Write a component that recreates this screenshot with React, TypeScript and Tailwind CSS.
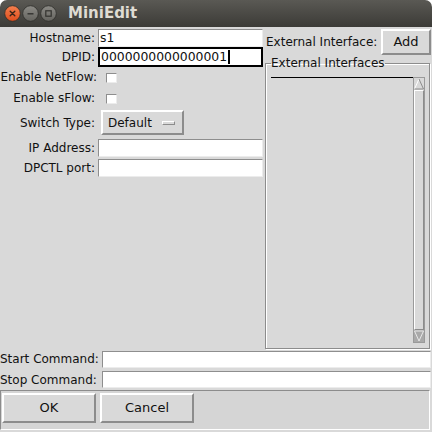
import type { ReactNode } from 'react';

// Tk-style 3D edges: light top-left, dark bottom-right for raised, inverted for sunken.
const raised = 'border-2 border-t-white border-l-white border-b-[#8c8c8c] border-r-[#8c8c8c]';
const sunken = 'border border-t-[#8e8e8e] border-l-[#8e8e8e] border-b-[#ececec] border-r-[#ececec]';

function WindowButton({ kind }: { kind: 'close' | 'min' | 'max' }) {
  const isClose = kind === 'close';
  return (
    <svg width="17" height="17" viewBox="0 0 17 17">
      <defs>
        <linearGradient id={`g-${kind}`} x1="0" y1="0" x2="0" y2="1">
          <stop offset="0" stopColor={isClose ? '#f4804f' : '#8c8b86'} />
          <stop offset="1" stopColor={isClose ? '#df4d1c' : '#64635e'} />
        </linearGradient>
      </defs>
      <circle cx="8.5" cy="8.5" r="7.8" fill={`url(#g-${kind})`} stroke="#2f2e2b" strokeWidth="0.8" />
      {kind === 'close' && (
        <path d="M6.2 6.2 L10.8 10.8 M10.8 6.2 L6.2 10.8" stroke="#3a2418" strokeWidth="1.4" strokeLinecap="round" />
      )}
      {kind === 'min' && <path d="M5.5 8.8 H11.5" stroke="#33322f" strokeWidth="1.4" />}
      {kind === 'max' && <rect x="5.8" y="5.8" width="5.4" height="5.4" fill="none" stroke="#33322f" strokeWidth="1.2" />}
    </svg>
  );
}

function TitleBar() {
  return (
    <div className="flex h-[27px] items-center rounded-t-[7px] bg-gradient-to-b from-[#5a5954] to-[#3c3b37] pl-[4px]">
      <div className="flex gap-[1px]">
        <WindowButton kind="close" />
        <WindowButton kind="min" />
        <WindowButton kind="max" />
      </div>
      <span className="ml-[11px] text-[15px] leading-none font-bold text-[#dfdbd2]">MiniEdit</span>
    </div>
  );
}

function Entry({ value, focused, className = '' }: { value?: string; focused?: boolean; className?: string }) {
  const edge = focused ? 'border-2 border-black' : sunken;
  return (
    <div className={`flex items-center bg-white pl-[1px] leading-none ${edge} ${className}`}>
      {value && <span className="whitespace-nowrap text-[12.4px]">{value}</span>}
      {focused && <span className="ml-[1px] h-[14px] w-[2px] bg-black" />}
    </div>
  );
}

function Checkbox() {
  return <div className={`ml-[8px] h-[10px] w-[11px] bg-white ${sunken}`} />;
}

function Label({ children, tight }: { children: ReactNode; tight?: boolean }) {
  return (
    <div className={`flex items-center justify-end whitespace-nowrap ${tight ? '' : 'pr-[2px]'}`}>{children}</div>
  );
}

function LeftForm() {
  return (
    <div className="grid w-[264px] shrink-0 grid-cols-[97px_1fr] grid-rows-[19px_20px_20px_21px_29px_21px_19px] gap-x-px pt-[1px]">
      <Label>Hostname:</Label>
      <Entry value="s1" className="mr-px h-[18px] self-end" />

      <Label>DPID:</Label>
      <Entry value="0000000000000001" focused className="mr-px h-[20px]" />

      <Label tight>Enable NetFlow:</Label>
      <div className="flex items-center pt-[2px]">
        <Checkbox />
      </div>

      <Label>Enable sFlow:</Label>
      <div className="flex items-center pt-[3px]">
        <Checkbox />
      </div>

      <Label>Switch Type:</Label>
      <div className="flex items-center">
        <div className={`ml-[3px] flex h-[25px] w-[83px] items-center bg-[#d9d9d9] pl-[5px] ${raised}`}>
          <span>Default</span>
          <span className="ml-auto mr-[7px] h-[4px] w-[13px] border border-t-white border-l-white border-b-[#8c8c8c] border-r-[#8c8c8c]" />
        </div>
      </div>

      <Label>IP Address:</Label>
      <Entry className="mr-px h-[18px] self-center" />

      <Label>DPCTL port:</Label>
      <Entry className="mr-px h-[18px] self-center" />
    </div>
  );
}

function Scrollbar() {
  return (
    <div className="flex w-[12px] flex-col border border-[#9a9a9a] bg-[#d9d9d9]">
      <svg width="10" height="12" viewBox="0 0 10 12" className="shrink-0">
        <polygon points="5,1 9.5,11 0.5,11" fill="#d9d9d9" />
        <path d="M0.5 11 L5 1" stroke="#ffffff" strokeWidth="1" />
        <path d="M5 1 L9.5 11 L0.5 11" fill="none" stroke="#8c8c8c" strokeWidth="1" />
      </svg>
      <div className="flex-1 border border-t-white border-l-white border-b-[#8c8c8c] border-r-[#8c8c8c]" />
      <svg width="10" height="12" viewBox="0 0 10 12" className="shrink-0 bg-[#a9a9a9]">
        <path d="M0.5 1 L9.5 1 L5 11 Z" fill="none" stroke="#e8e8e8" strokeWidth="1" />
      </svg>
    </div>
  );
}

function RightPanel() {
  return (
    <div className="flex min-w-0 flex-1 flex-col">
      <div className="flex h-[29px] items-center pl-[2px]">
        <span className="whitespace-nowrap">External Interface:</span>
        <div className={`mr-px ml-auto flex h-[26px] w-[50px] items-center justify-center self-start mt-[2px] text-[13px] ${raised}`}>
          Add
        </div>
      </div>
      <fieldset className="mr-[2px] ml-[1px] h-[293px] border border-[#8c8c8c] pr-[4px] pl-[5px] shadow-[inset_1px_1px_0_#fff,1px_1px_0_#fff]">
        <legend className="px-0 leading-[14px]">External Interfaces</legend>
        <div className="mt-[7px] flex h-[266px]">
          <div className="flex-1 border-t border-black" />
          <Scrollbar />
        </div>
      </fieldset>
    </div>
  );
}

function CommandRows() {
  return (
    <div className="grid h-[41px] grid-cols-[102px_1fr] grid-rows-[20px_21px]">
      <div className="flex items-center whitespace-nowrap">Start Command:</div>
      <Entry className="mr-px h-[17px] self-center" />
      <div className="flex items-center whitespace-nowrap">Stop Command:</div>
      <Entry className="mr-px h-[17px] self-center" />
    </div>
  );
}

function ButtonBar() {
  return (
    <div className="h-[42px]">
      <div className="flex h-[40px] w-[430px] gap-[4px] border border-t-[#8c8c8c] border-l-[#8c8c8c] border-b-white border-r-white bg-[#d5d5d5] pt-[2px] pl-[1px]">
        <div className={`flex h-[30px] w-[94px] items-center justify-center bg-[#d9d9d9] text-[13px] ${raised}`}>OK</div>
        <div className={`flex h-[30px] w-[94px] items-center justify-center bg-[#d9d9d9] text-[13px] ${raised}`}>Cancel</div>
      </div>
    </div>
  );
}

export default function App() {
  return (
    <div className="h-[432px] w-[432px] overflow-hidden bg-white font-['DejaVu_Sans',sans-serif] text-[12px] text-[#111]">
      <TitleBar />
      <div className="flex h-[405px] flex-col bg-[#d9d9d9]">
        <div className="flex h-[322px]">
          <LeftForm />
          <RightPanel />
        </div>
        <CommandRows />
        <ButtonBar />
      </div>
    </div>
  );
}
